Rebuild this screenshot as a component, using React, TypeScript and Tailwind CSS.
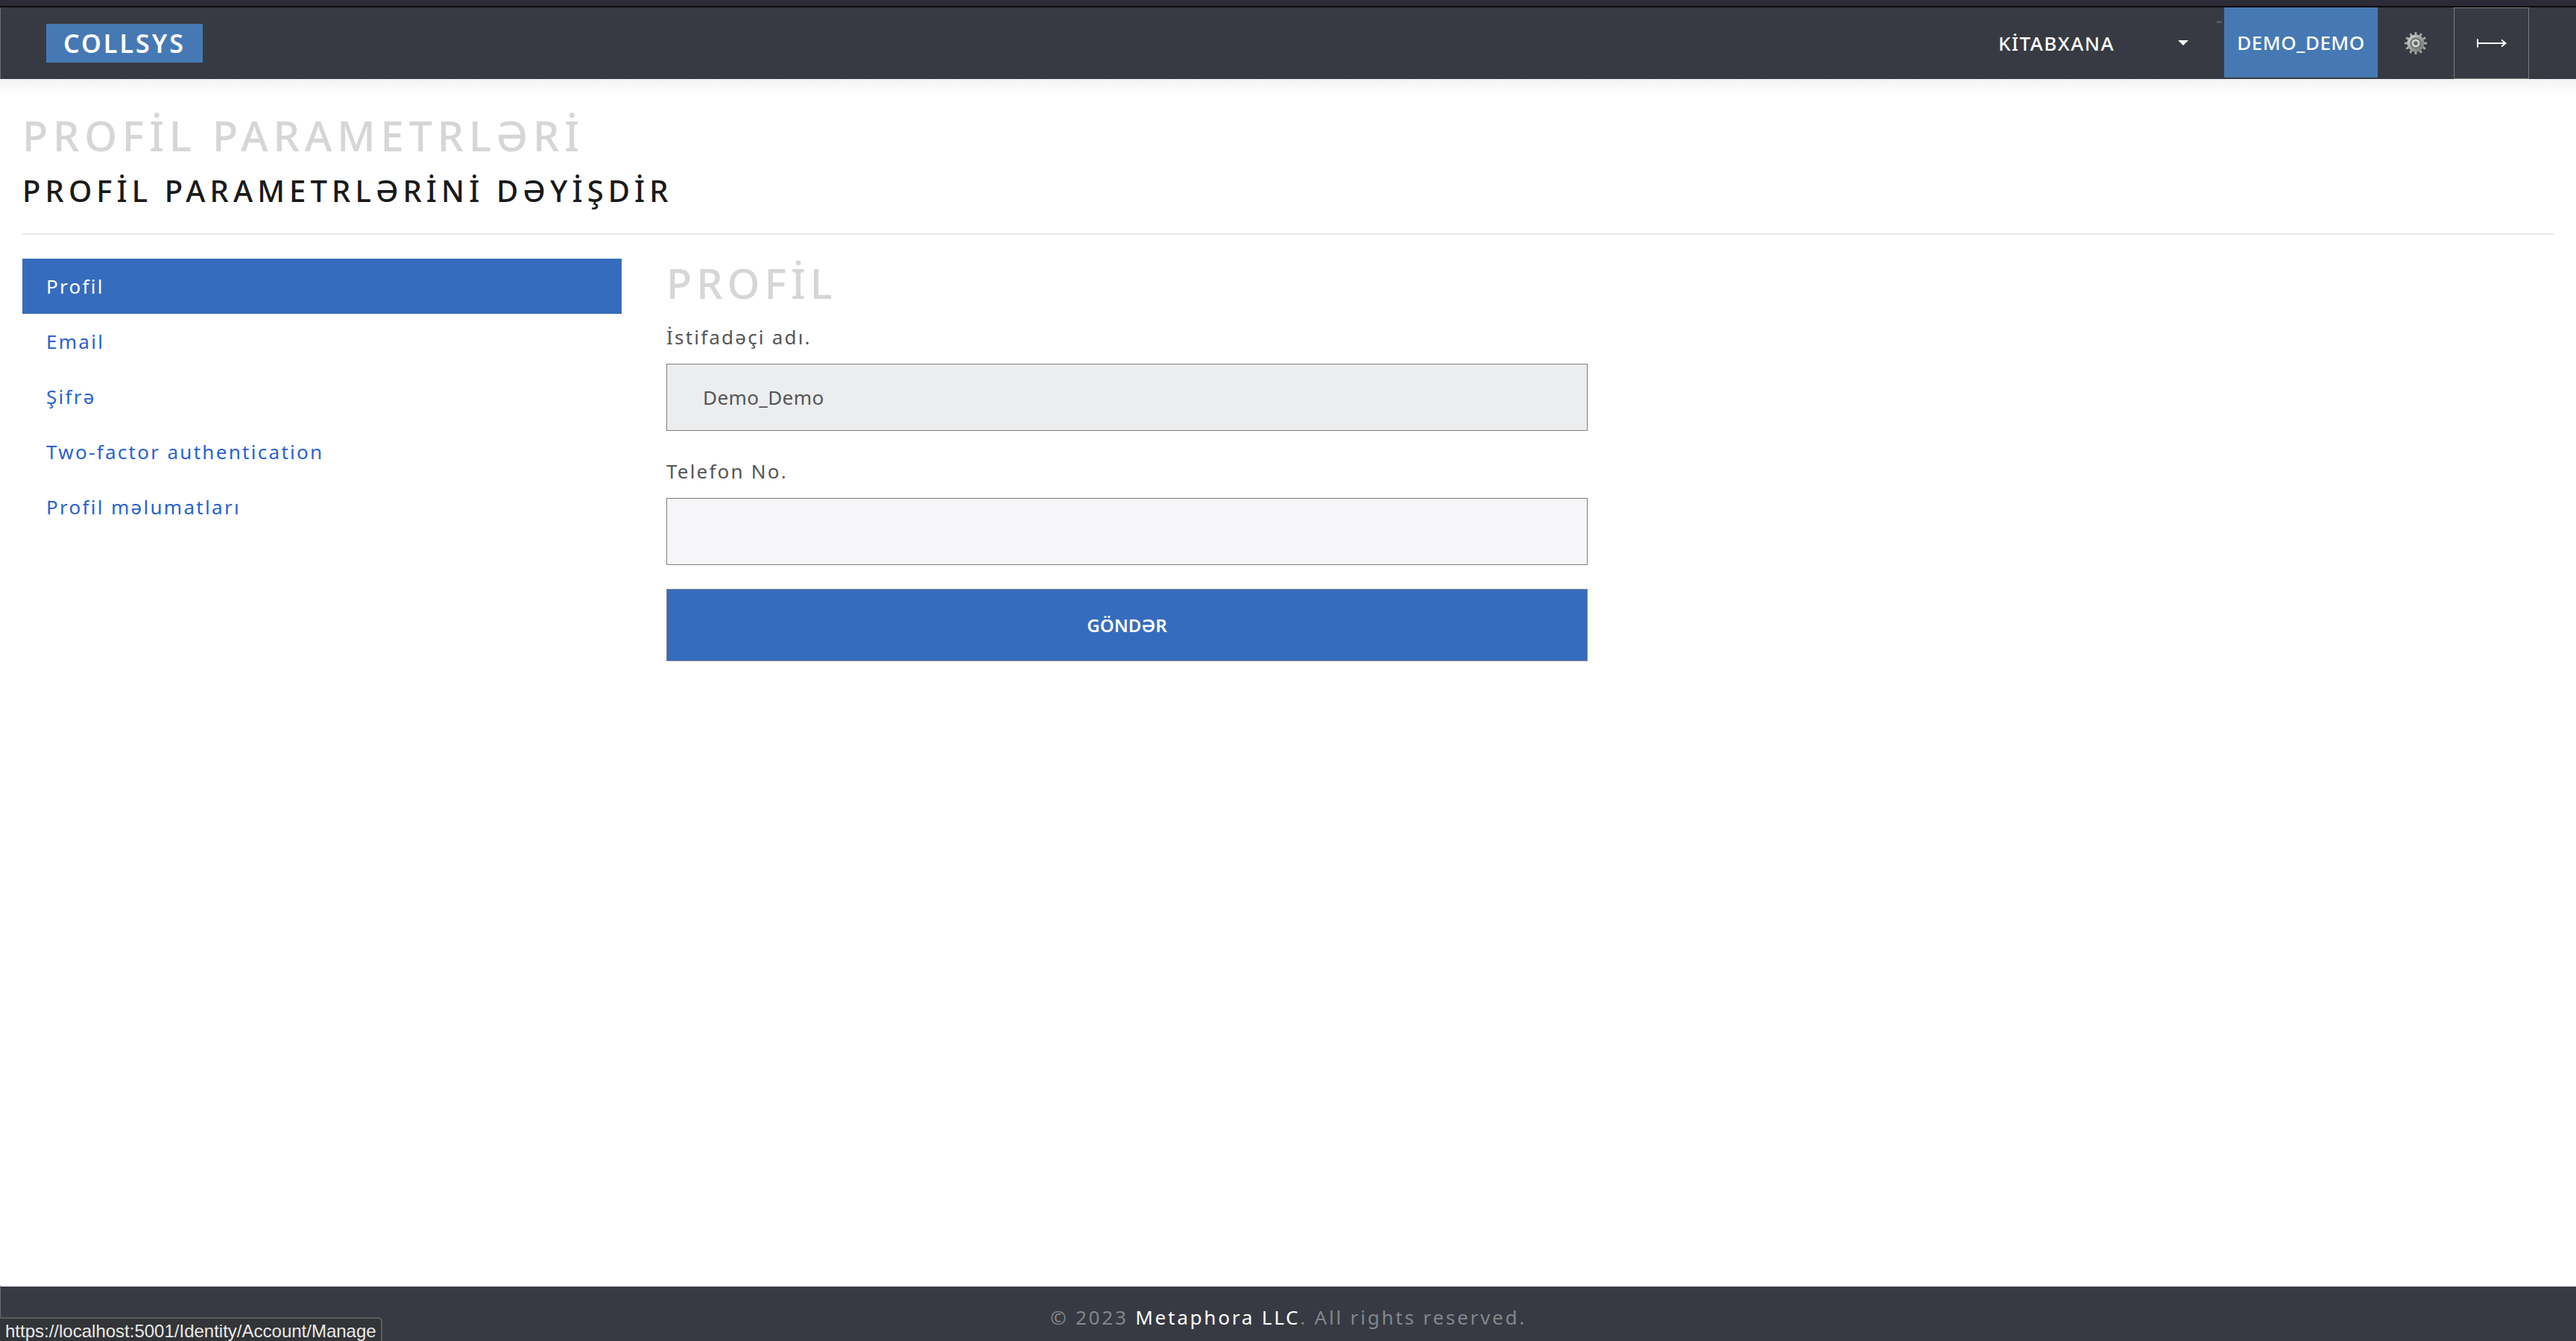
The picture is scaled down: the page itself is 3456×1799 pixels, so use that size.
import React from "react";

const font = { fontFamily: '"Noto Sans", "Open Sans", sans-serif' };

function Gear() {
  const teeth = Array.from({ length: 12 }, (_, i) => i * 30);
  return (
    <svg width="32" height="32" viewBox="0 0 32 32" aria-hidden="true">
      <defs>
        <linearGradient id="gearMetal" x1="0" y1="0" x2="1" y2="1">
          <stop offset="0" stopColor="#d9d9d9" />
          <stop offset="0.5" stopColor="#a0a0a0" />
          <stop offset="1" stopColor="#6f6f6f" />
        </linearGradient>
      </defs>
      {teeth.map((a) => (
        <rect key={a} x="14.6" y="1" width="2.8" height="5" fill="#aaaaaa" transform={`rotate(${a} 16 16)`} />
      ))}
      <circle cx="16" cy="16" r="11.5" fill="url(#gearMetal)" />
      <circle cx="16" cy="16" r="7.5" fill="#6c6c6c" />
      <circle cx="16" cy="16" r="5.5" fill="#d2d2d2" />
      <circle cx="16" cy="16" r="2.8" fill="#63666e" />
    </svg>
  );
}

function ExitArrow() {
  return (
    <svg width="40" height="14" viewBox="0 0 40 14" aria-hidden="true">
      <path d="M1 1.5v11M1 7h36" stroke="#fff" strokeWidth="2" fill="none" />
      <path d="M33 2.5l5.5 4.5-5.5 4.5" stroke="#fff" strokeWidth="2" fill="none" />
    </svg>
  );
}

const links = ["Email", "Şifrə", "Two-factor authentication", "Profil məlumatları"];

export default function App() {
  return (
    <div style={font} className="relative flex h-[1799px] w-[3456px] flex-col overflow-hidden bg-white">
      <div className="h-2 bg-[#2b2a36]" />
      <div className="h-0.5 bg-[#0d0d10]" />
      <header className="flex h-24 items-stretch border-l border-[#6b6e75] bg-[#373a42] pl-[61px] pr-[63px]">
        <div className="mt-[22px] flex h-[52px] w-[210px] items-center justify-center bg-[#4679b3] text-[34px] font-semibold tracking-[3px] text-white">
          COLLSYS
        </div>
        <div className="relative ml-auto flex items-center pr-[48px]">
          <span className="text-[26px] font-medium tracking-[1.5px] text-white">KİTABXANA</span>
          <span className="ml-[85px] mt-[-2px] h-0 w-0 border-x-[7px] border-t-[7px] border-x-transparent border-t-white" />
          <span className="absolute right-[3px] top-[18px] h-[3px] w-[7px] bg-[#55585f]" />
        </div>
        <div className="mb-0.5 flex w-[206px] items-center justify-center bg-[#4679b3] text-[26px] font-medium tracking-[0.5px] text-white">
          DEMO_DEMO
        </div>
        <div className="flex w-[102px] items-center justify-center">
          <Gear />
        </div>
        <div className="flex w-[101px] items-center justify-center border border-[#7b7b7b]">
          <ExitArrow />
        </div>
      </header>
      <div className="h-5 bg-gradient-to-b from-[#f3f3f3] to-white" />

      <main className="flex-1 px-[30px]">
        <h1 className="mt-[17px] text-[56px] font-medium leading-[76px] tracking-[6.8px] text-[#d6d6d6]">PROFİL PARAMETRLƏRİ</h1>
        <h2 className="mt-[10px] text-[40px] font-medium leading-[54px] tracking-[6.1px] text-[#1a1a1a]">PROFİL PARAMETRLƏRİNİ DƏYİŞDİR</h2>
        <hr className="mt-[30px] border-t-2 border-[#e5e5e5]" />

        <div className="mt-8 flex">
          <nav className="flex w-[804px] flex-col">
            <a className="flex h-[74px] items-center bg-[#366cbd] px-8 text-[26px] tracking-[2.3px] text-white">Profil</a>
            {links.map((l) => (
              <a key={l} className="flex h-[74px] items-center px-8 text-[26px] tracking-[2.3px] text-[#2a62d0]">
                {l}
              </a>
            ))}
          </nav>

          <section className="ml-[60px] w-[1236px]">
            <h3 className="text-[56px] font-medium leading-[64px] tracking-[6px] text-[#d6d6d6]">PROFİL</h3>
            <label className="mt-[23px] block text-[26px] leading-[36px] tracking-[2.2px] text-[#555]">İstifadəçi adı.</label>
            <input
              readOnly
              value="Demo_Demo"
              className="mt-[18px] block h-[90px] w-full border border-[#7f7f7f] bg-[#ecedef] px-[48px] text-[26px] tracking-[0.4px] text-[#555] outline-none"
            />
            <label className="mt-[36px] block text-[26px] leading-[36px] tracking-[2.2px] text-[#555]">Telefon No.</label>
            <input className="mt-[18px] block h-[90px] w-full border border-[#7f7f7f] bg-[#f6f6f8] px-[48px] text-[26px] outline-none" />
            <button className="mt-[32px] block h-[97px] w-full border border-[#7f8590] bg-[#366cbd] text-[24px] font-semibold text-white">
              GÖNDƏR
            </button>
          </section>
        </div>
      </main>

      <footer className="flex h-[75px] items-center justify-center border-t-2 border-l border-[#e9ecef] border-l-[#6b6e75] bg-[#373a42] pt-[10px] text-[26px] tracking-[2.8px] text-[#83868d]">
        <span>
          © 2023 <span className="text-white">Metaphora LLC</span>. All rights reserved.
        </span>
      </footer>

      <div
        className="absolute bottom-0 left-0 flex h-8 w-[513px] items-start rounded-tr-md border-t-2 border-r-2 border-[#5b5c60] bg-[#333437] pl-[7px] pt-[2px] text-[24px] leading-[30px] text-[#e9e9e9]"
        style={{ fontFamily: '"Liberation Sans", Arial, sans-serif' }}
      >
        https://localhost:5001/Identity/Account/Manage
      </div>
    </div>
  );
}
